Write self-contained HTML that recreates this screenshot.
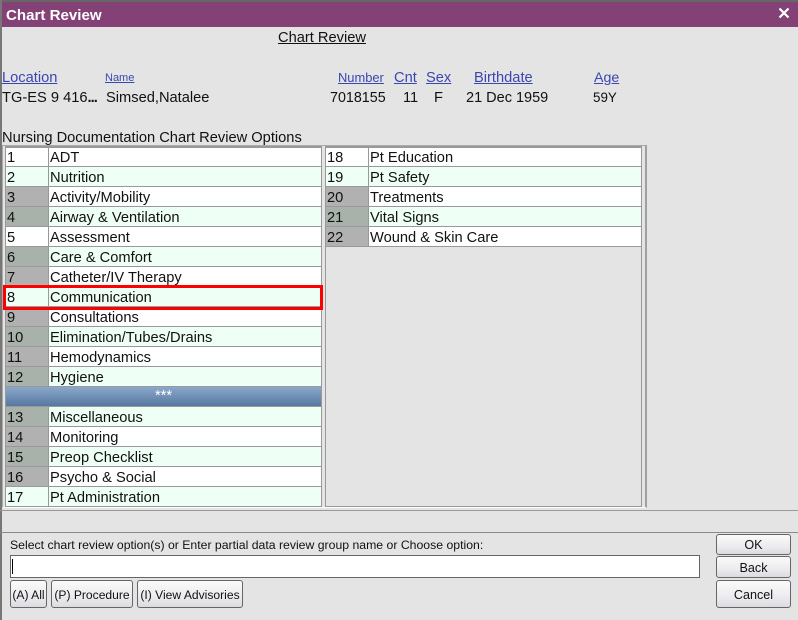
<!DOCTYPE html>
<html><head><meta charset="utf-8"><title>Chart Review</title>
<style>
html,body{margin:0;padding:0}
body{width:798px;height:620px;overflow:hidden;position:relative;background:#e4e4e4;font-family:"Liberation Sans",sans-serif;font-size:14.67px;color:#111}
div,a,span{position:absolute;white-space:nowrap}
#tb{left:0;top:0;width:798px;height:27px;background:#834175;border-top:2px solid #666;box-sizing:border-box}
#tb b{position:absolute;left:6px;top:5px;color:#fff;font-size:15.1px;line-height:17px}
#lb{left:0;top:0;width:2px;height:620px;background:#777}
.l{color:#3b46b0;text-decoration:underline;line-height:16px}
.t{line-height:16px}
.tbl{width:315px;height:359px;top:146px;border:1px solid #999;background:#e4e4e4}
.tl{top:147px;width:317px;height:1px;background:#999}
.r{left:0;width:315px;height:19px;border-bottom:1px solid #999;background:#fff;line-height:22px}
.g{background:#eefff5}
.n{left:0;top:0;height:19px;border-right:1px solid #999;padding-left:1px;width:41px}
.d{background:#b1b1b1}
.g .d{background:#a9b2aa}
.x{left:44px;top:0}
button{position:absolute;font:12.1px "Liberation Sans",sans-serif;color:#111;background:linear-gradient(#fafafa,#ececf0 60%,#dcdce0);border:1px solid #666;border-radius:3px;padding:1px 0 0;margin:0;box-sizing:border-box}
button.b{font-size:12.6px}
</style></head><body>
<div id="tb"><b>Chart Review</b>
<svg style="position:absolute;left:778px;top:5px" width="12" height="12" viewBox="0 0 12 12"><path d="M1.5 1.5L10.5 10.5M10.5 1.5L1.5 10.5" stroke="#fff" stroke-width="2.2" fill="none"/></svg></div>
<div id="lb"></div>
<div class="t" style="left:278px;top:30px;text-decoration:underline">Chart Review</div>
<a class="l" style="left:2px;top:70px">Location</a>
<a class="l" style="left:105px;top:70px;font-size:11px">Name</a>
<a class="l" style="left:338px;top:70px;font-size:12.9px">Number</a>
<a class="l" style="left:394px;top:70px">Cnt</a>
<a class="l" style="left:426px;top:70px">Sex</a>
<a class="l" style="left:474px;top:70px">Birthdate</a>
<a class="l" style="left:594px;top:70px;font-size:14.2px">Age</a>
<div class="t" style="left:2px;top:90px">TG-ES 9 416<b style="letter-spacing:-1px">...</b></div>
<div class="t" style="left:106px;top:90px">Simsed,Natalee</div>
<div class="t" style="left:330px;top:90px;font-size:14.3px">7018155</div>
<div class="t" style="left:403px;top:90px">11</div>
<div class="t" style="left:434px;top:90px">F</div>
<div class="t" style="left:466px;top:90px;font-size:14.5px">21 Dec 1959</div>
<div class="t" style="left:593px;top:90px;font-size:13.4px">59Y</div>
<div class="t" style="left:2px;top:130px">Nursing Documentation Chart Review Options</div>

<div style="left:2px;top:145px;width:642px;height:361px;border:1px solid #aaa;border-right:2px solid #a0a0a0;border-bottom:1px solid #fff"></div>
<div style="left:0;top:510px;width:798px;height:1px;background:#999"></div>
<div style="left:0;top:532px;width:798px;height:1px;background:#8a8a8a"></div>

<div class="tbl" style="left:5px">
<div class="r" style="top:0"><div class="n">1</div><div class="x">ADT</div></div>
<div class="r g" style="top:20px"><div class="n">2</div><div class="x">Nutrition</div></div>
<div class="r" style="top:40px"><div class="n d">3</div><div class="x">Activity/Mobility</div></div>
<div class="r g" style="top:60px"><div class="n d">4</div><div class="x">Airway &amp; Ventilation</div></div>
<div class="r" style="top:80px"><div class="n">5</div><div class="x">Assessment</div></div>
<div class="r g" style="top:100px"><div class="n d">6</div><div class="x">Care &amp; Comfort</div></div>
<div class="r" style="top:120px"><div class="n d">7</div><div class="x">Catheter/IV Therapy</div></div>
<div class="r g" style="top:140px"><div class="n">8</div><div class="x">Communication</div></div>
<div class="r" style="top:160px"><div class="n d">9</div><div class="x">Consultations</div></div>
<div class="r g" style="top:180px"><div class="n d">10</div><div class="x">Elimination/Tubes/Drains</div></div>
<div class="r" style="top:200px"><div class="n d">11</div><div class="x">Hemodynamics</div></div>
<div class="r g" style="top:220px"><div class="n d">12</div><div class="x">Hygiene</div></div>
<div class="r" style="top:240px;background:linear-gradient(#8ba8cb,#56779f);color:#fff;text-align:center;font-size:14.67px;line-height:19px">***</div>
<div class="r g" style="top:260px"><div class="n d">13</div><div class="x">Miscellaneous</div></div>
<div class="r" style="top:280px"><div class="n d">14</div><div class="x">Monitoring</div></div>
<div class="r g" style="top:300px"><div class="n d">15</div><div class="x">Preop Checklist</div></div>
<div class="r" style="top:320px"><div class="n d">16</div><div class="x">Psycho &amp; Social</div></div>
<div class="r g" style="top:340px"><div class="n">17</div><div class="x">Pt Administration</div></div>
</div>
<div class="tl" style="left:5px"></div>

<div class="tbl" style="left:325px">
<div class="r" style="top:0"><div class="n">18</div><div class="x">Pt Education</div></div>
<div class="r g" style="top:20px"><div class="n">19</div><div class="x">Pt Safety</div></div>
<div class="r" style="top:40px"><div class="n d">20</div><div class="x">Treatments</div></div>
<div class="r g" style="top:60px"><div class="n d">21</div><div class="x">Vital Signs</div></div>
<div class="r" style="top:80px"><div class="n d">22</div><div class="x">Wound &amp; Skin Care</div></div>
</div>
<div class="tl" style="left:325px"></div>

<div style="left:3px;top:285px;width:320px;height:25px;border:3px solid #f00;box-sizing:border-box"></div>

<div style="left:10px;top:538px;font-size:12.25px;line-height:14px;color:#111">Select chart review option(s) or Enter partial data review group name or Choose option:</div>
<div style="left:10px;top:555px;width:690px;height:23px;background:#fff;border:1px solid #666;box-sizing:border-box"><div style="left:1px;top:3px;width:1px;height:15px;background:#000"></div></div>
<button style="left:10px;top:580px;width:37px;height:28px">(A) All</button>
<button style="left:51px;top:580px;width:82px;height:28px">(P) Procedure</button>
<button style="left:137px;top:580px;width:106px;height:28px">(I) View Advisories</button>
<button class="b" style="left:716px;top:534px;width:75px;height:21px;padding:0">OK</button>
<button class="b" style="left:716px;top:556px;width:75px;height:22px">Back</button>
<button class="b" style="left:716px;top:580px;width:75px;height:28px">Cancel</button>
</body></html>
